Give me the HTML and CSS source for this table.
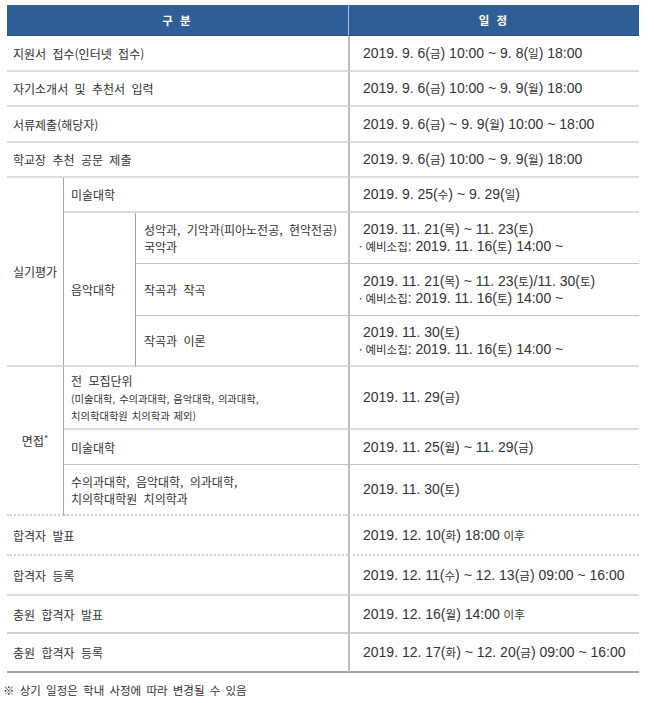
FILE: index.html
```html
<!DOCTYPE html>
<html lang="ko">
<head>
<meta charset="utf-8">
<link rel="stylesheet" href="styles.css">
</head>
<body>
<table class="sched">
  <colgroup>
    <col class="c1"><col class="c2"><col class="c3"><col class="c4">
  </colgroup>
  <thead>
    <tr class="hd">
      <th colspan="3" class="th-left">구 분</th>
      <th class="th-right">일 정</th>
    </tr>
  </thead>
  <tbody>
    <tr class="h36">
      <td colspan="3" class="lab b-light">지원서 접수(인터넷 접수)</td>
      <td class="date b-light">2019. 9. 6(<span class="k">금</span>) 10:00 ~ 9. 8(<span class="k">일</span>) 18:00</td>
    </tr>
    <tr class="h35">
      <td colspan="3" class="lab b-light">자기소개서 및 추천서 입력</td>
      <td class="date b-light">2019. 9. 6(<span class="k">금</span>) 10:00 ~ 9. 9(<span class="k">월</span>) 18:00</td>
    </tr>
    <tr class="h36">
      <td colspan="3" class="lab b-light">서류제출(해당자)</td>
      <td class="date b-light">2019. 9. 6(<span class="k">금</span>) ~ 9. 9(<span class="k">월</span>) 10:00 ~ 18:00</td>
    </tr>
    <tr class="h35">
      <td colspan="3" class="lab b-light">학교장 추천 공문 제출</td>
      <td class="date b-light">2019. 9. 6(<span class="k">금</span>) 10:00 ~ 9. 9(<span class="k">월</span>) 18:00</td>
    </tr>
    <tr class="h35">
      <td rowspan="4" class="lab grp b-light">실기평가</td>
      <td colspan="2" class="lab sub b-light">미술대학</td>
      <td class="date b-light">2019. 9. 25(<span class="k">수</span>) ~ 9. 29(<span class="k">일</span>)</td>
    </tr>
    <tr class="h51">
      <td rowspan="3" class="lab sub b-light">음악대학</td>
      <td class="lab sub2 b-thin">성악과, 기악과(피아노전공, 현악전공)<br>국악과</td>
      <td class="date b-thin">2019. 11. 21(<span class="k">목</span>) ~ 11. 23(<span class="k">토</span>)<br><span class="pre"><span class="k">· 예비소집</span>: 2019. 11. 16(<span class="k">토</span>) 14:00 ~</span></td>
    </tr>
    <tr class="h52">
      <td class="lab sub2 b-thin">작곡과 작곡</td>
      <td class="date b-thin">2019. 11. 21(<span class="k">목</span>) ~ 11. 23(<span class="k">토</span>)/11. 30(<span class="k">토</span>)<br><span class="pre"><span class="k">· 예비소집</span>: 2019. 11. 16(<span class="k">토</span>) 14:00 ~</span></td>
    </tr>
    <tr class="h51">
      <td class="lab sub2 b-light">작곡과 이론</td>
      <td class="date b-light">2019. 11. 30(<span class="k">토</span>)<br><span class="pre"><span class="k">· 예비소집</span>: 2019. 11. 16(<span class="k">토</span>) 14:00 ~</span></td>
    </tr>
    <tr class="h63">
      <td rowspan="3" class="lab grp b-dot">면접<sup class="ast">*</sup></td>
      <td colspan="2" class="lab sub b-light">전 모집단위<br><span class="small">(미술대학, 수의과대학, 음악대학, 의과대학,<br>치의학대학원 치의학과 제외)</span></td>
      <td class="date b-light">2019. 11. 29(<span class="k">금</span>)</td>
    </tr>
    <tr class="h35">
      <td colspan="2" class="lab sub b-thin">미술대학</td>
      <td class="date b-thin">2019. 11. 25(<span class="k">월</span>) ~ 11. 29(<span class="k">금</span>)</td>
    </tr>
    <tr class="h51">
      <td colspan="2" class="lab sub b-dot">수의과대학, 음악대학, 의과대학,<br>치의학대학원 치의학과</td>
      <td class="date b-dot">2019. 11. 30(<span class="k">토</span>)</td>
    </tr>
    <tr class="h40">
      <td colspan="3" class="lab b-dot">합격자 발표</td>
      <td class="date b-dot">2019. 12. 10(<span class="k">화</span>) 18:00 <span class="k">이후</span></td>
    </tr>
    <tr class="h40">
      <td colspan="3" class="lab b-light">합격자 등록</td>
      <td class="date b-light">2019. 12. 11(<span class="k">수</span>) ~ 12. 13(<span class="k">금</span>) 09:00 ~ 16:00</td>
    </tr>
    <tr class="h38">
      <td colspan="3" class="lab b-mid">충원 합격자 발표</td>
      <td class="date b-mid">2019. 12. 16(<span class="k">월</span>) 14:00 <span class="k">이후</span></td>
    </tr>
    <tr class="h39">
      <td colspan="3" class="lab b-end">충원 합격자 등록</td>
      <td class="date b-end">2019. 12. 17(<span class="k">화</span>) ~ 12. 20(<span class="k">금</span>) 09:00 ~ 16:00</td>
    </tr>
  </tbody>
</table>
<p class="note">※ 상기 일정은 학내 사정에 따라 변경될 수 있음</p>
</body>
</html>
```
FILE: styles.css
```css
html, body {
  margin: 0;
  padding: 0;
  background: #ffffff;
}
body {
  padding: 5px 0 0 3px;
  font-family: "Noto Sans CJK KR", "Liberation Sans", sans-serif;
  color: #333333;
}
.sched {
  margin-left: 4px;
  width: 632px;
  border-collapse: separate;
  border-spacing: 0;
  table-layout: fixed;
}
.c1 { width: 57px; }
.c2 { width: 71px; }
.c3 { width: 213px; }
.c4 { width: 291px; }

.hd { height: 31px; }
.sched th {
  background: #2f5e96;
  color: #ffffff;
  font-weight: 700;
  font-size: 11.5px;
  letter-spacing: 2px;
  padding: 0;
  border-bottom: 1px solid #24507f;
  box-sizing: border-box;
}
.th-right { border-left: 1px solid #a9bcd3; }

.sched td {
  padding: 0;
  vertical-align: middle;
  box-sizing: border-box;
}
.lab {
  font-size: 12px;
  line-height: 17px;
  padding-left: 6px !important;
  word-spacing: 3px;
  color: #333;
}
.grp {
  text-align: center;
  padding-left: 0 !important;
  border-right: 1px solid #a6a6a6;
}
.sub { padding-left: 7px !important; }
.sub2 {
  padding-left: 8px !important;
  border-left: 1px solid #a0a0a0;
}
.date {
  font-family: "Liberation Sans", "Noto Sans CJK KR", sans-serif;
  font-size: 14px;
  line-height: 17px;
  padding-left: 13px !important;
  border-left: 2px solid #bdbdbd;
  color: #333;
}
.k {
  font-family: "Noto Sans CJK KR", sans-serif;
  font-size: 11.5px;
}
.pre { margin-left: -4px; }
.small {
  font-size: 10.3px;
  line-height: 13px;
  word-spacing: 1px;
}
.ast {
  font-size: 9px;
  vertical-align: 4px;
  line-height: 0;
}

.h35 { height: 35px; }
.h36 { height: 36px; }
.h38 { height: 38px; }
.h39 { height: 39px; }
.h40 { height: 40px; }
.h51 { height: 51px; }
.h52 { height: 52px; }
.h63 { height: 63px; }

.b-light { border-bottom: 2px solid #dcdcdc; }
.b-thin { border-bottom: 1px solid #c4c4c4; }
.b-dot { border-bottom: 2px dotted #cfcfcf; }
.b-mid { border-bottom: 2px solid #cfcfcf; }
.b-end { border-bottom: 2px solid #a3a3a3; }

.note {
  margin: 9px 0 0 0;
  font-size: 11.5px;
  word-spacing: 2px;
  color: #333;
}
```
